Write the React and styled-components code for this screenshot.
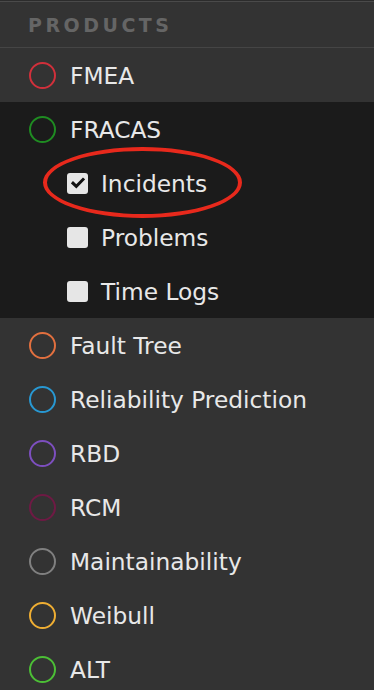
import React from "react";
import styled, { createGlobalStyle } from "styled-components";

const Global = createGlobalStyle`
  html, body { margin: 0; padding: 0; background: #333333; }
  body { font-family: "DejaVu Sans", Verdana, sans-serif; -webkit-font-smoothing: antialiased; }
`;

const Panel = styled.nav`
  width: 374px;
  background: #333333;
  border-top: 1px solid #2c2c2c;
`;

const Header = styled.div`
  height: 45px;
  border-top: 1px solid #4a4a4a;
  border-bottom: 1px solid #454545;
  display: flex;
  align-items: center;
  padding-left: 28px;
  font-weight: bold;
  font-size: 19px;
  letter-spacing: 3.5px;
  color: #656565;
`;

const Row = styled.div`
  position: relative;
  height: 54px;
  display: flex;
  align-items: center;
  gap: ${(p) => (p.$sub ? "13px" : "14px")};
  padding-left: ${(p) => (p.$sub ? "67px" : "29px")};
  font-size: 23.3px;
  color: #e8e8e8;
`;

const Group = styled.div`
  background: #1b1b1b;
`;

const Ring = styled.span`
  width: 27px;
  height: 27px;
  box-sizing: border-box;
  border-radius: 50%;
  border: 2.5px solid ${(p) => p.$color};
  flex: none;
`;

const Box = styled.span`
  width: 21px;
  height: 21px;
  border-radius: 3px;
  background: #e6e6e6;
  flex: none;
  display: flex;
  align-items: center;
  justify-content: center;
`;

const Highlight = styled.span`
  position: absolute;
  left: 43px;
  top: -9px;
  width: 199px;
  height: 71px;
  box-sizing: border-box;
  border: 4.5px solid #e8291c;
  border-radius: 50%;
  pointer-events: none;
`;

const Check = () => (
  <svg width="14" height="14" viewBox="0 0 14 14">
    <path d="M2 7.2 L5.3 10.3 L12 3.5" fill="none" stroke="#111" strokeWidth="3" strokeLinecap="square" />
  </svg>
);

const before = [{ name: "FMEA", color: "#d1303b" }];
const after = [
  { name: "Fault Tree", color: "#e2703f" },
  { name: "Reliability Prediction", color: "#2898d2" },
  { name: "RBD", color: "#7d4fbf" },
  { name: "RCM", color: "#6e1a44" },
  { name: "Maintainability", color: "#808080" },
  { name: "Weibull", color: "#efae33" },
  { name: "ALT", color: "#4cbf36" },
];
const subs = [
  { name: "Incidents", checked: true },
  { name: "Problems" },
  { name: "Time Logs" },
];

export default function App() {
  return (
    <>
      <Global />
      <Panel>
        <Header>PRODUCTS</Header>
        {before.map((p) => (
          <Row key={p.name}>
            <Ring $color={p.color} />
            {p.name}
          </Row>
        ))}
        <Group>
          <Row>
            <Ring $color="#1f8c22" />
            FRACAS
          </Row>
          {subs.map((s) => (
            <Row key={s.name} $sub>
              <Box>{s.checked && <Check />}</Box>
              {s.name}
              {s.checked && <Highlight />}
            </Row>
          ))}
        </Group>
        {after.map((p) => (
          <Row key={p.name}>
            <Ring $color={p.color} />
            {p.name}
          </Row>
        ))}
      </Panel>
    </>
  );
}
